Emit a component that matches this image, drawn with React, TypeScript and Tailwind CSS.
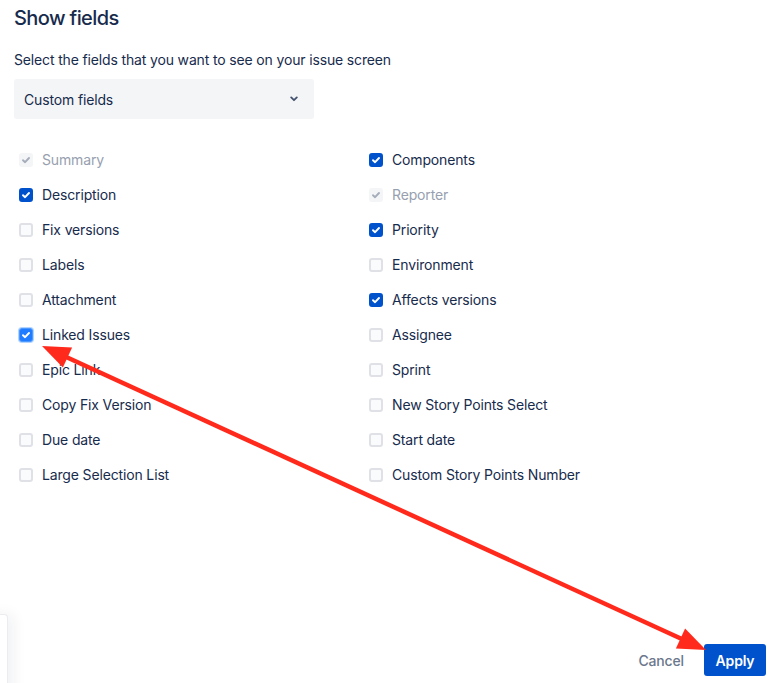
import React, { useState } from 'react';

type Field = { label: string; checked: boolean; locked?: boolean; focused?: boolean };

const leftFields: Field[] = [
  { label: 'Summary', checked: true, locked: true },
  { label: 'Description', checked: true },
  { label: 'Fix versions', checked: false },
  { label: 'Labels', checked: false },
  { label: 'Attachment', checked: false },
  { label: 'Linked Issues', checked: true, focused: true },
  { label: 'Epic Link', checked: false },
  { label: 'Copy Fix Version', checked: false },
  { label: 'Due date', checked: false },
  { label: 'Large Selection List', checked: false },
];

const rightFields: Field[] = [
  { label: 'Components', checked: true },
  { label: 'Reporter', checked: true, locked: true },
  { label: 'Priority', checked: true },
  { label: 'Environment', checked: false },
  { label: 'Affects versions', checked: true },
  { label: 'Assignee', checked: false },
  { label: 'Sprint', checked: false },
  { label: 'New Story Points Select', checked: false },
  { label: 'Start date', checked: false },
  { label: 'Custom Story Points Number', checked: false },
];

const Tick: React.FC<{ color: string }> = ({ color }) => (
  <svg width="10" height="10" viewBox="0 0 10 10" fill="none">
    <path d="M2 5.2L4.1 7.2L8 3" stroke={color} strokeWidth="1.9" strokeLinecap="round" strokeLinejoin="round" />
  </svg>
);

const FieldRow: React.FC<{ field: Field }> = ({ field }) => {
  const [checked, setChecked] = useState(field.checked);

  let box = 'bg-[#FAFBFC] border-2 border-[#DFE1E6]';
  if (field.locked) box = 'bg-[#F4F5F7] border-2 border-[#F4F5F7]';
  else if (checked && field.focused) box = 'bg-[#1F7BFF] border border-[#4C9AFF] ring-1 ring-[#B3D4FF]';
  else if (checked) box = 'bg-[#0052CC] border-2 border-[#0052CC]';

  return (
    <button
      type="button"
      onClick={() => !field.locked && setChecked(!checked)}
      className="flex h-[35px] items-center gap-[9px] pl-[5px] text-left"
    >
      <span className={`flex h-[14px] w-[14px] items-center justify-center rounded-[3px] ${box}`}>
        {checked && <Tick color={field.locked ? '#A5ADBA' : '#FFFFFF'} />}
      </span>
      <span
        className={`text-[14px] leading-[20px] tracking-[-0.15px] ${field.locked ? 'text-[#97A0AF]' : 'text-[#172B4D]'}`}
      >
        {field.label}
      </span>
    </button>
  );
};

export default function App() {
  return (
    <div
      className="relative flex h-[683px] w-[778px] flex-col overflow-hidden bg-white"
      style={{ fontFamily: 'Inter, "Noto Sans", sans-serif' }}
    >
      <div className="px-[14px]">
        <h2 className="pt-[6px] text-[20px] font-medium leading-[24px] tracking-[-0.6px] text-[#172B4D]">Show fields</h2>
        <p className="mt-[20px] text-[14px] leading-[20px] tracking-[-0.15px] text-[#172B4D]">
          Select the fields that you want to see on your issue screen
        </p>
        <div className="mt-[9px] flex h-[40px] w-[300px] items-center justify-between rounded-[3px] bg-[#F4F5F7] pl-[10px] pr-[16px]">
          <span className="text-[14px] tracking-[-0.15px] text-[#172B4D]">Custom fields</span>
          <svg width="8" height="6" viewBox="0 0 8 6" fill="none">
            <path d="M1.2 1.4L4 4.2L6.8 1.4" stroke="#42526E" strokeWidth="1.8" strokeLinecap="round" strokeLinejoin="round" />
          </svg>
        </div>

        <div className="mt-[23px] grid grid-cols-[350px_350px]">
          <div className="flex flex-col">
            {leftFields.map((f) => (
              <FieldRow key={f.label} field={f} />
            ))}
          </div>
          <div className="flex flex-col">
            {rightFields.map((f) => (
              <FieldRow key={f.label} field={f} />
            ))}
          </div>
        </div>
      </div>

      <div className="flex-1" />

      <div className="flex items-center justify-end gap-[10px] pb-[7px] pr-[12px]">
        <button type="button" className="h-[32px] px-[10px] text-[14px] font-medium tracking-[-0.15px] text-[#6B778C]">
          Cancel
        </button>
        <button
          type="button"
          className="h-[32px] w-[62px] rounded-[3px] bg-[#0052CC] text-[14px] font-semibold tracking-[-0.15px] text-white"
        >
          Apply
        </button>
      </div>

      {/* edge of the neighbouring panel peeking in */}
      <div className="pointer-events-none absolute left-[-30px] top-[614px] h-[120px] w-[38px] rounded-tr-[4px] border-r border-t border-[#EBECF0] bg-white shadow-[6px_0_14px_rgba(9,30,66,0.06)]" />

      {/* annotation arrow */}
      <svg className="pointer-events-none absolute left-0 top-0" width="778" height="683" viewBox="0 0 778 683">
        <line x1="64" y1="356" x2="684" y2="640" stroke="#FF2A1C" strokeWidth="4.5" />
        <polygon points="42,346 62.9,367.6 72.1,347.6" fill="#FF2A1C" />
        <polygon points="706,650 675.9,648.4 685.1,628.4" fill="#FF2A1C" />
      </svg>
    </div>
  );
}
